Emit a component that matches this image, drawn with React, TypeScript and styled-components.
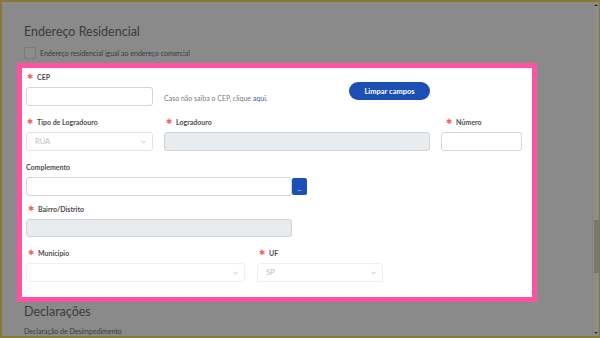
import React from "react";
import styled, { createGlobalStyle } from "styled-components";

const GlobalStyle = createGlobalStyle`
  html, body {
    margin: 0;
    padding: 0;
  }
  body {
    width: 600px;
    height: 338px;
    overflow: hidden;
    background: #8a8a8a;
    font-family: Lato, "Open Sans", "Liberation Sans", sans-serif;
  }
`;

const Screen = styled.div`
  width: 600px;
  height: 338px;
  box-sizing: border-box;
  border-style: solid;
  border-color: #857a33;
  border-width: 2px 1px 2px 2px;
  background: #8a8a8a;
  display: flex;
  overflow: hidden;
`;

const Page = styled.main`
  flex: 1;
  min-width: 0;
  padding-left: 15px;
  overflow: hidden;
`;

const SectionTitle = styled.h2<{ $top: number }>`
  margin: ${(p) => p.$top}px 0 0 7px;
  font-size: 12.5px;
  line-height: 16px;
  font-weight: 400;
  color: #3b3b3b;
`;

const CheckRow = styled.label`
  display: flex;
  align-items: center;
  gap: 4px;
  margin: 7px 0 0 7px;
  height: 11px;
  font-size: 7px;
  color: #3a3a3a;
`;

const FakeCheck = styled.span`
  width: 10px;
  height: 10px;
  border: 1px solid #7b7b7b;
  border-radius: 2px;
  background: #8c8c8c;
`;

const Highlight = styled.section`
  width: 520px;
  box-sizing: border-box;
  margin-top: 5px;
  border: 5px solid #ff52a2;
  background: #ffffff;
  padding: 4px 10px 15px 4px;
`;

const Row = styled.div<{ $mt?: number; $gap?: number }>`
  display: flex;
  align-items: flex-start;
  gap: ${(p) => p.$gap ?? 11}px;
  margin-top: ${(p) => p.$mt ?? 0}px;
`;

const Field = styled.div<{ $w: number }>`
  width: ${(p) => p.$w}px;
  display: flex;
  flex-direction: column;
`;

const Label = styled.div<{ $indent?: number }>`
  display: flex;
  align-items: center;
  height: 10px;
  margin-bottom: 5px;
  padding-left: ${(p) => p.$indent ?? 1}px;
  font-size: 7px;
  font-weight: 700;
  color: #4d4d4d;
  white-space: nowrap;
`;

const Req = styled.span`
  width: 6px;
  margin-right: 4px;
  font-family: "DejaVu Sans", sans-serif;
  font-size: 7.5px;
  line-height: 10px;
  color: #f2665a;
`;

const Input = styled.div<{ $disabled?: boolean; $h?: number }>`
  width: 100%;
  min-width: 0;
  height: ${(p) => p.$h ?? 19}px;
  box-sizing: border-box;
  border: 1px solid ${(p) => (p.$disabled ? "#cfd3d8" : "#d5d5d5")};
  border-radius: 3px;
  background: ${(p) => (p.$disabled ? "#e9ecef" : "#ffffff")};
`;

const Select = styled.div<{ $faint?: boolean }>`
  height: 19px;
  box-sizing: border-box;
  display: flex;
  align-items: center;
  justify-content: space-between;
  padding: 0 6px 0 8px;
  border: 1px solid ${(p) => (p.$faint ? "#efefef" : "#e3e3e3")};
  border-radius: 3px;
  font-size: 7.5px;
  color: #bdbdbd;
  background: #ffffff;
`;

const HelpCell = styled.div<{ $w: number }>`
  width: ${(p) => p.$w}px;
  display: flex;
  align-items: flex-start;
`;

const HelpText = styled.span`
  margin-top: 21px;
  font-size: 7px;
  line-height: 10px;
  color: #7a7a7a;
  white-space: nowrap;
  a {
    color: #3561b4;
    text-decoration: none;
  }
`;

const PillButton = styled.button`
  margin: 10px 0 0 auto;
  width: 81px;
  height: 18px;
  border: none;
  border-radius: 9px;
  background: #1b4fb4;
  color: #ffffff;
  font-family: inherit;
  font-size: 7.5px;
  font-weight: 700;
  padding: 0;
`;

const InputGroup = styled.div`
  display: flex;
  align-items: center;
`;

const AddonButton = styled.button`
  flex: none;
  width: 15px;
  height: 17px;
  padding: 0 0 3px;
  border: none;
  border-radius: 2px;
  background: #1d50b6;
  color: #ffffff;
  font-family: inherit;
  font-size: 6px;
  line-height: 1;
  display: flex;
  align-items: flex-end;
  justify-content: center;
`;

const SmallText = styled.div`
  margin: 7px 0 0 7px;
  font-size: 7px;
  color: #3a3a3a;
`;

const Scrollbar = styled.div`
  width: 6px;
  background: #8c8c8c;
  border-left: 1px solid #858585;
  display: flex;
  flex-direction: column;
  align-items: center;
`;

const Thumb = styled.div<{ $top: number; $h: number }>`
  width: 5px;
  margin-top: ${(p) => p.$top}px;
  height: ${(p) => p.$h}px;
  background: #777777;
`;

const Arrow = styled.div<{ $down?: boolean }>`
  width: 0;
  height: 0;
  margin-top: ${(p) => (p.$down ? "auto" : "2px")};
  margin-bottom: ${(p) => (p.$down ? "2px" : "0")};
  border-left: 2px solid transparent;
  border-right: 2px solid transparent;
  ${(p) =>
    p.$down ? "border-top: 2px solid #333;" : "border-bottom: 2px solid #333;"}
`;

const Chevron = () => (
  <svg width="5" height="4" viewBox="0 0 5 4">
    <path d="M0.6 1 L2.5 2.9 L4.4 1" fill="none" stroke="#a7b6d2" strokeWidth="0.8" />
  </svg>
);

const Star = () => <Req>✱</Req>;

export default function App() {
  return (
    <>
      <GlobalStyle />
      <Screen>
        <Page>
          <SectionTitle $top={22}>Endereço Residencial</SectionTitle>
          <CheckRow>
            <FakeCheck />
            Endereço residencial igual ao endereço comercial
          </CheckRow>

          <Highlight>
            <Row>
              <Field $w={127}>
                <Label>
                  <Star />
                  CEP
                </Label>
                <Input />
              </Field>
              <HelpCell $w={266}>
                <HelpText>
                  Caso não saiba o CEP, clique <a href="#">aqui.</a>
                </HelpText>
                <PillButton>Limpar campos</PillButton>
              </HelpCell>
            </Row>

            <Row $mt={11}>
              <Field $w={127}>
                <Label>
                  <Star />
                  Tipo de Logradouro
                </Label>
                <Select>
                  RUA
                  <Chevron />
                </Select>
              </Field>
              <Field $w={266}>
                <Label $indent={2}>
                  <Star />
                  Logradouro
                </Label>
                <Input $disabled />
              </Field>
              <Field $w={81}>
                <Label $indent={5}>
                  <Star />
                  Número
                </Label>
                <Input />
              </Field>
            </Row>

            <Row $mt={11}>
              <Field $w={281}>
                <Label $indent={0}>Complemento</Label>
                <InputGroup>
                  <Input />
                  <AddonButton>...</AddonButton>
                </InputGroup>
              </Field>
            </Row>

            <Row $mt={8}>
              <Field $w={266}>
                <Label $indent={2}>
                  <Star />
                  Bairro/Distrito
                </Label>
                <Input $disabled $h={18} />
              </Field>
            </Row>

            <Row $mt={11} $gap={12}>
              <Field $w={219}>
                <Label $indent={2}>
                  <Star />
                  Município
                </Label>
                <Select $faint>
                  <span />
                  <Chevron />
                </Select>
              </Field>
              <Field $w={126}>
                <Label $indent={2}>
                  <Star />
                  UF
                </Label>
                <Select $faint>
                  SP
                  <Chevron />
                </Select>
              </Field>
            </Row>
          </Highlight>

          <SectionTitle $top={2}>Declarações</SectionTitle>
          <SmallText>Declaração de Desimpedimento</SmallText>
        </Page>
        <Scrollbar>
          <Arrow />
          <Thumb $top={214} $h={53} />
          <Arrow $down />
        </Scrollbar>
      </Screen>
    </>
  );
}
